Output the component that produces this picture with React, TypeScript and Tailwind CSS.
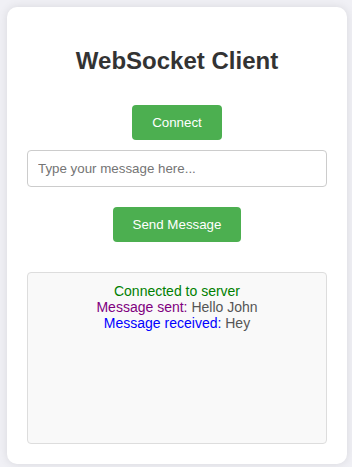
import React, { useState } from 'react';

const App: React.FC = () => {
  const [message, setMessage] = useState<string>('');

  return (
    <div className="min-h-[467px] bg-[#f0f0f5] p-[7px] font-['Liberation_Sans',Arial,sans-serif]">
      <div className="w-[340px] rounded-[10px] bg-white px-5 pt-5 pb-5 shadow-[0_0_10px_rgba(0,0,0,0.1)]">
        <h1 className="mt-5 mb-[30px] text-center text-[24px] leading-[28px] font-bold text-[#333]">
          WebSocket Client
        </h1>

        <div className="flex justify-center">
          <button className="h-[35px] rounded-[4px] bg-[#4CAF50] px-5 text-[13.33px] text-white">
            Connect
          </button>
        </div>

        <input
          type="text"
          value={message}
          onChange={(e) => setMessage(e.target.value)}
          placeholder="Type your message here..."
          className="mt-[10px] block h-[37px] w-full rounded-[4px] border border-[#ccc] bg-white px-[10px] text-[13.33px] text-[#333] placeholder:text-[#757575] outline-none"
        />

        <div className="mt-5 flex justify-center">
          <button className="h-[35px] rounded-[4px] bg-[#4CAF50] px-5 text-[13.33px] text-white">
            Send Message
          </button>
        </div>

        <div className="mt-[30px] h-[172px] rounded-[4px] border border-[#ddd] bg-[#f9f9f9] p-[10px] text-center text-[14px] leading-[16px] text-[#555]">
          <div className="text-[#008000]">Connected to server</div>
          <div>
            <span className="text-[#800080]">Message sent:</span> Hello John
          </div>
          <div>
            <span className="text-[#0000ff]">Message received:</span> Hey
          </div>
        </div>
      </div>
    </div>
  );
};

export default App;
